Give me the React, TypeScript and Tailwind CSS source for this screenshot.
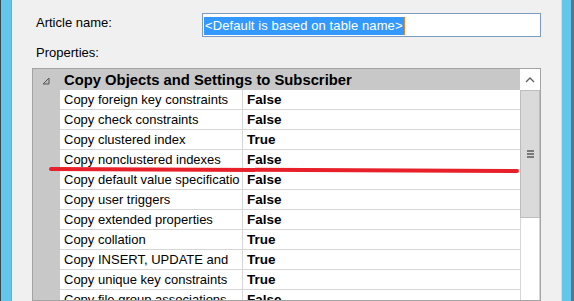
const rows: { name: string; value: string }[] = [
  { name: "Copy foreign key constraints", value: "False" },
  { name: "Copy check constraints", value: "False" },
  { name: "Copy clustered index", value: "True" },
  { name: "Copy nonclustered indexes", value: "False" },
  { name: "Copy default value specificatio", value: "False" },
  { name: "Copy user triggers", value: "False" },
  { name: "Copy extended properties", value: "False" },
  { name: "Copy collation", value: "True" },
  { name: "Copy INSERT, UPDATE and", value: "True" },
  { name: "Copy unique key constraints", value: "True" },
  { name: "Copy file group associations", value: "False" },
];

export default function App() {
  return (
    <div className="relative flex w-[574px] h-[301px] overflow-hidden bg-[#f0f0f0] font-['Liberation_Sans',Arial,sans-serif] text-[13px] text-black">
      {/* left window edge */}
      <div className="w-px bg-[#3a4650]" />
      <div className="w-[10px] bg-[#62c7ea]" />
      <div className="w-px bg-[#9c9c9c]" />

      <div className="flex-1 flex flex-col pl-[20px] pr-[20px]">
        {/* Article name */}
        <div className="flex mt-[13px] h-[24px]">
          <div className="w-[170px] pl-[4px] pt-[2px] leading-[15px]">Article name:</div>
          <div className="flex-1 flex items-center border border-[#7b9bc2] bg-white px-px">
            <span className="bg-[#3399ff] text-white leading-[18px] h-[18px] px-[1px] mt-[1px] tracking-[0.1px]">
              &lt;Default is based on table name&gt;
            </span>
            <span className="w-px h-[18px] mt-[1px] bg-[#f0821e]" />
          </div>
        </div>

        <div className="mt-[8px] pl-[4px] leading-[15px] h-[15px]">Properties:</div>

        {/* property grid */}
        <div className="mt-[8px] flex-1 flex border border-[#a3a3a3] bg-white overflow-hidden">
          <div className="flex-1 flex flex-col">
            <div className="flex h-[21px] bg-[#c8c8c8] items-center">
              <div className="w-[27px] flex justify-center">
                <svg width="8" height="8" viewBox="0 0 8 8" className="ml-[-1px] mt-[2px]">
                  <path d="M7 1 L7 7 L1 7 Z" fill="#bdbdbd" stroke="#555555" strokeWidth="1" />
                </svg>
              </div>
              <div className="pl-[4px] pt-px font-bold text-[14.8px] leading-[20px]">
                Copy Objects and Settings to Subscriber
              </div>
            </div>
            {rows.map((r) => (
              <div key={r.name} className="flex h-[20px]">
                <div className="w-[27px] bg-[#c8c8c8]" />
                <div className="flex-1 flex border-b border-[#d6d6d6]">
                  <div className="w-[183px] shrink-0 border-r border-[#d6d6d6] pl-[4px] pt-px leading-[18px] whitespace-nowrap overflow-hidden">
                    {r.name}
                  </div>
                  <div className="flex-1 pl-[4px] pt-px font-bold text-[13.5px] leading-[18px]">{r.value}</div>
                </div>
              </div>
            ))}
          </div>

          {/* scrollbar */}
          <div className="w-[20px] flex flex-col">
            <div className="h-[21px] flex items-center justify-center bg-white">
              <svg width="10" height="6" viewBox="0 0 10 6">
                <path d="M1 5 L5 1 L9 5" fill="none" stroke="#606060" strokeWidth="1.3" />
              </svg>
            </div>
            <div className="h-[128px] bg-[#dadada] border border-[#bdbdbd] flex flex-col items-center justify-center gap-[1px]">
              <div className="w-[7px] h-[2px] bg-[#7a7a7a]" />
              <div className="w-[7px] h-[2px] bg-[#7a7a7a]" />
              <div className="w-[7px] h-[2px] bg-[#7a7a7a]" />
            </div>
            <div className="flex-1 bg-white border-l border-[#d6d6d6] border-r border-[#bdbdbd]" />
          </div>
        </div>
      </div>

      {/* right window edge */}
      <div className="w-px bg-[#dadada]" />
      <div className="w-[9px] bg-[#62c7ea]" />
      <div className="w-[3px] bg-[#58788a]" />

      {/* red annotation */}
      <svg className="absolute left-0 top-0 pointer-events-none" width="574" height="301">
        <path d="M51 169 L517 171" stroke="#e8202a" strokeWidth="4" strokeLinecap="round" />
      </svg>
    </div>
  );
}
